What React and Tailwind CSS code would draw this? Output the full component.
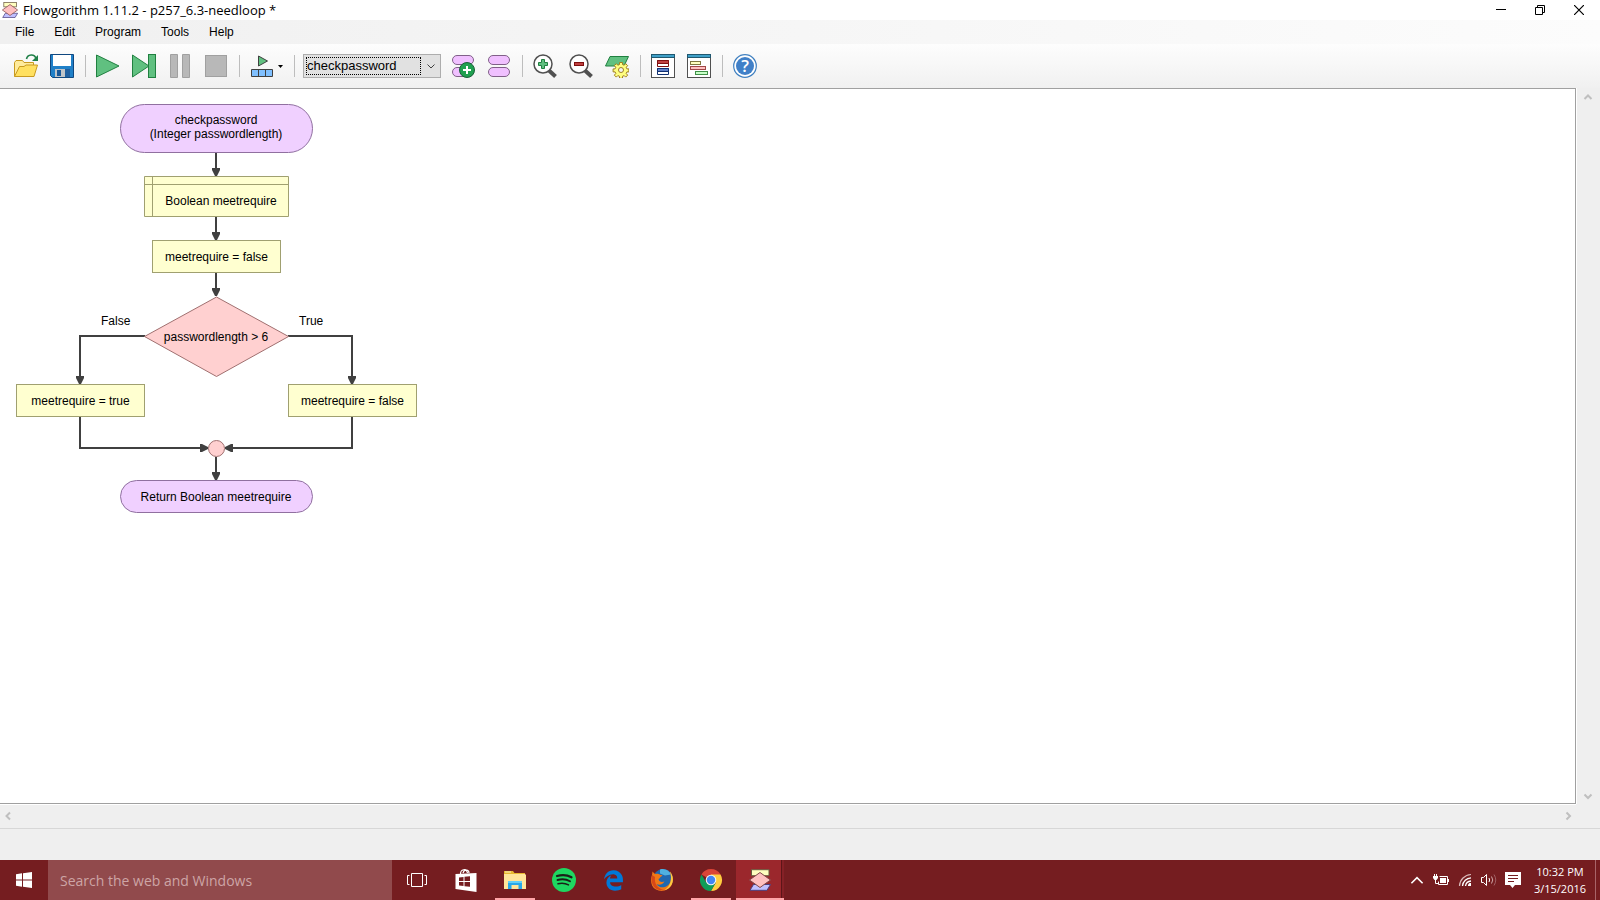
import { useState } from "react";
import { FaEdgeLegacy } from "react-icons/fa6";
import { clsx } from "clsx";

const MENUS = ["File", "Edit", "Program", "Tools", "Help"];
const FUNCTIONS = ["checkpassword", "Main"];

// --- ICONS ---
function Svg({ size = 24, box = 24, children }) {
  return (
    <svg width={size} height={size} viewBox={`0 0 ${box} ${box}`} fill="none" aria-hidden="true">
      {children}
    </svg>
  );
}

function AppLogo({ size }) {
  return (
    <Svg size={size} box={22}>
      <rect x="2.5" y="0.7" width="17.5" height="6" fill="#ffffc0" stroke="#6a5a40" />
      <path d="M4.5 15.5h17l-3.5 5.8H1z" fill="#c0c0ff" stroke="#4a4080" />
      <path d="M11 3.5 21.5 11 11 18.5 0.5 11z" fill="#ffc0c0" stroke="#804848" />
    </Svg>
  );
}

function OpenIcon() {
  return (
    <Svg>
      <path d="M.5 22.5v-14l1.500-2h6.500l1.500 2h9.500v3.500" fill="#ffeb9c" stroke="#c89a20" />
      <path d="M.5 22.500 5.500 12.500 10 12.500l2-1.500h11.500l-3.500 11.500z" fill="#ffe060" stroke="#c89a20" strokeLinejoin="round" />
      <path d="M12.500 5c1-5 8-5.500 9.500-.5" stroke="#208048" strokeWidth="1.600" />
      <path d="M24 1v6h-6z" fill="#208048" />
    </Svg>
  );
}

function SaveIcon() {
  return (
    <Svg>
      <path d="M.5.5h23v23h-21l-2-2z" fill="#2080c8" stroke="#104880" />
      <rect x="3" y="1" width="18" height="11" fill="#fff" />
      <rect x="5" y="15" width="15" height="8" fill="#c0c4c8" />
      <rect x="7" y="16" width="4" height="6" fill="#185898" />
      <rect x="15" y="15" width="5" height="8" fill="#2060a0" />
    </Svg>
  );
}

function PlayIcon() {
  return (
    <Svg>
      <path d="M.5 1 23 12 .5 23z" fill="#60c080" stroke="#208040" />
    </Svg>
  );
}

function StepIcon() {
  return (
    <Svg>
      <path d="M.5 1 17 12 .5 23z" fill="#60c080" stroke="#208040" />
      <rect x="16.500" y=".5" width="7" height="23" fill="#60c080" stroke="#208040" />
    </Svg>
  );
}

function PauseIcon() {
  return (
    <Svg>
      <path d="M2.500.5h7v23h-7zM14.500.5h7v23h-7z" fill="#b8b8b8" stroke="#a0a0a0" />
    </Svg>
  );
}

function StopIcon() {
  return (
    <Svg>
      <rect x="1.500" y="1.500" width="21" height="21" fill="#b8b8b8" stroke="#a0a0a0" />
    </Svg>
  );
}

function SpeedIcon() {
  return (
    <Svg>
      <path d="M8.500 2 17.500 7 8.500 12z" fill="#60c080" stroke="#404040" />
      <path d="M1.500 15.500h21v7h-21zM8.500 15.500v7M15.500 15.500v7" fill="#80c0ff" stroke="#404040" />
    </Svg>
  );
}

function Pills() {
  return (
    <g fill="#f0c0ff" stroke="#806088">
      <rect x="1.500" y="1.500" width="21" height="9" rx="4.500" />
      <rect x="1.500" y="13.500" width="21" height="9" rx="4.500" />
    </g>
  );
}

function AddFunctionIcon() {
  return (
    <Svg>
      <Pills />
      <circle cx="16" cy="16" r="7.500" fill="#20a050" stroke="#186038" />
      <path d="M16 12v8M12 16h8" stroke="#fff" strokeWidth="2" />
    </Svg>
  );
}

function FunctionsIcon() {
  return (
    <Svg>
      <Pills />
    </Svg>
  );
}

function Lens({ children }) {
  return (
    <Svg>
      <path d="m16 16.500 6.500 6" stroke="#505050" strokeWidth="4" />
      <circle cx="10" cy="10" r="9" fill="#fff" stroke="#505050" strokeWidth="1.500" />
      {children}
    </Svg>
  );
}

function ZoomInIcon() {
  return (
    <Lens>
      <path d="M8.500 5.500h3v3h3v3h-3v3h-3v-3h-3v-3h3z" fill="#60c080" stroke="#208040" />
    </Lens>
  );
}

function ZoomOutIcon() {
  return (
    <Lens>
      <rect x="5.500" y="8.500" width="9" height="3" fill="#c04040" stroke="#801010" />
    </Lens>
  );
}

function StyleIcon() {
  return (
    <Svg>
      <path d="M5 2.500h18.500L19 12H.5z" fill="#60c080" stroke="#208040" />
      <g transform="translate(16 16)">
        <path
          d="M-1.500-7.500h3v2l1.700.7 1.500-1.500 2 2-1.500 1.500.7 1.700h2v3h-2l-.7 1.700 1.500 1.500-2 2-1.500-1.500-1.700.7v2h-3v-2l-1.700-.7-1.500 1.500-2-2 1.500-1.500-.7-1.700h-2v-3h2l.7-1.700-1.500-1.500 2-2 1.500 1.500 1.700-.7z"
          fill="#ffff80"
          stroke="#a08020"
        />
        <circle r="2.500" fill="#f4f4f4" stroke="#a08020" />
      </g>
    </Svg>
  );
}

function WindowFrame({ children }) {
  return (
    <Svg>
      <rect x=".5" y=".5" width="23" height="23" fill="#fff" stroke="#505050" />
      <rect x=".5" y=".5" width="23" height="3" fill="#40a0c8" stroke="#205870" />
      {children}
    </Svg>
  );
}

function VariablesIcon() {
  return (
    <WindowFrame>
      <path d="M6.500 6.500h11v6h-11z" stroke="#801010" />
      <path d="M6.500 6.500h11v3h-11z" fill="#c04040" stroke="#801010" />
      <path d="M6.500 14.500h11v6h-11z" stroke="#103070" />
      <path d="M6.500 14.500h11v3h-11z" fill="#6080c8" stroke="#103070" />
    </WindowFrame>
  );
}

function ConsoleIcon() {
  return (
    <WindowFrame>
      <rect x="3.500" y="7.500" width="10" height="3" fill="#ffffc0" stroke="#807840" />
      <rect x="3.500" y="12.500" width="15" height="3" fill="#ffc0c0" stroke="#a04848" />
      <rect x="8.500" y="17.500" width="12" height="3" fill="#c8ffc8" stroke="#409048" />
    </WindowFrame>
  );
}

function HelpIcon() {
  return (
    <Svg>
      <circle cx="12" cy="12" r="11.300" fill="#fff" stroke="#4080c0" strokeWidth="1.200" />
      <circle cx="12" cy="12" r="9" fill="#4080c8" />
      <text x="12" y="18" textAnchor="middle" fill="#fff" fontSize="17" fontWeight="600" fontFamily="Open Sans, sans-serif">
        ?
      </text>
    </Svg>
  );
}

const CHEVRONS = {
  up: "M1.500 7 5 3.500 8.500 7",
  down: "M1.500 3.500 5 7 8.500 3.500",
  left: "M7 1.500 3.500 5 7 8.500",
  right: "M3.500 1.500 7 5 3.500 8.500",
};

function Chevron({ dir, size = 10, color = "#bfbfbf", weight = 2 }) {
  return (
    <Svg size={size} box={10}>
      <path d={CHEVRONS[dir]} stroke={color} strokeWidth={weight} />
    </Svg>
  );
}

// --- TITLE AND MENU ---
function TitleBar() {
  return (
    <header className="flex h-5 items-center bg-white pl-0.5">
      <AppLogo size={16} />
      <h1 className="ml-[5px] flex-1 font-['Open_Sans',sans-serif] text-[13px] leading-5 text-black">
        Flowgorithm 1.11.2 - p257_6.3-needloop *
      </h1>
      <div className="flex pr-0.5">
        <button aria-label="Minimize" className="flex h-5 w-[39px] items-center justify-center">
          <Svg size={10} box={10}>
            <path d="M0 4.500h10" stroke="#000" />
          </Svg>
        </button>
        <button aria-label="Restore" className="flex h-5 w-[39px] items-center justify-center">
          <Svg size={10} box={10}>
            <path d="M.5 2.500h7v7h-7zM2.500 2.500v-2h7v7h-2" stroke="#000" />
          </Svg>
        </button>
        <button aria-label="Close" className="flex h-5 w-[39px] items-center justify-center">
          <Svg size={10} box={10}>
            <path d="m0 0 10 10M10 0 0 10" stroke="#000" strokeWidth="1.200" />
          </Svg>
        </button>
      </div>
    </header>
  );
}

function MenuBar() {
  return (
    <nav className="flex h-6 items-center bg-linear-to-r from-[#f0f0f0] to-[#fcfcfc] pl-[5px]">
      {MENUS.map((name) => (
        <button key={name} className="px-2.5 text-[12px] leading-6 text-black">
          {name}
        </button>
      ))}
    </nav>
  );
}

// --- TOOLBAR ---
function Tool({ label, icon: Icon, disabled }) {
  return (
    <button aria-label={label} disabled={disabled} className="flex h-9 w-9 items-center justify-center">
      <Icon />
    </button>
  );
}

function Separator() {
  return (
    <div className="flex w-2.5 justify-center">
      <div className="h-[22px] w-px bg-[#bdbdbd]" />
    </div>
  );
}

function FunctionSelect() {
  const [value, setValue] = useState(FUNCTIONS[0]);

  return (
    <div className="mx-1 flex h-6 w-[138px] items-center border border-[#adadad] bg-[#e1e1e1] pl-0.5">
      <select
        aria-label="Function"
        value={value}
        onChange={(e) => setValue(e.target.value)}
        className="h-[18px] flex-1 appearance-none border border-dotted border-black text-[13px] leading-4 text-black outline-none"
      >
        {FUNCTIONS.map((name) => (
          <option key={name}>{name}</option>
        ))}
      </select>
      <span className="flex w-[19px] justify-center">
        <Chevron dir="down" weight={1} color="#404040" />
      </span>
    </div>
  );
}

function Toolbar() {
  return (
    <div className="flex h-11 items-center bg-linear-to-b from-[#fdfdfd] via-[#f7f7f7] to-[#f0f0f0] pl-2">
      <Tool label="Open" icon={OpenIcon} />
      <Tool label="Save" icon={SaveIcon} />
      <Separator />
      <Tool label="Run" icon={PlayIcon} />
      <Tool label="Step" icon={StepIcon} />
      <Tool label="Pause" icon={PauseIcon} disabled />
      <Tool label="Stop" icon={StopIcon} disabled />
      <Separator />
      <button aria-label="Run speed" className="flex h-9 w-[45px] items-center gap-1 pl-1.5">
        <SpeedIcon />
        <svg width="5" height="3" viewBox="0 0 5 3" aria-hidden="true">
          <path d="M0 0h5L2.500 3z" />
        </svg>
      </button>
      <Separator />
      <FunctionSelect />
      <Tool label="Add function" icon={AddFunctionIcon} />
      <Tool label="Manage functions" icon={FunctionsIcon} />
      <Separator />
      <Tool label="Zoom in" icon={ZoomInIcon} />
      <Tool label="Zoom out" icon={ZoomOutIcon} />
      <Tool label="Chart style" icon={StyleIcon} />
      <Separator />
      <Tool label="Variable watch" icon={VariablesIcon} />
      <Tool label="Console" icon={ConsoleIcon} />
      <Separator />
      <Tool label="Help" icon={HelpIcon} />
    </div>
  );
}

// --- FLOWCHART ---
const YELLOW = { fill: "#ffffd0", stroke: "#a0a070" };
const PINK = { fill: "#ffd0d0", stroke: "#a07070" };
const PURPLE = { fill: "#f0d0ff", stroke: "#9070a0" };

const ARROWS = [
  "M216 64v19",
  "M216 128v19",
  "M216 184v19",
  "M145 247H80v44",
  "M288 247h64v44",
  "M80 328v31h124",
  "M352 328v31H229",
  "M216 368v19",
];

function Label({ x, y, anchor = "middle", children }) {
  return (
    <text x={x} y={y} textAnchor={anchor} className="fill-black text-[12px]">
      {children}
    </text>
  );
}

function Box({ x, y, children }) {
  return (
    <g>
      <rect x={x} y={y} width="128" height="32" {...YELLOW} />
      <Label x={x + 64} y={y + 20.5}>{children}</Label>
    </g>
  );
}

function Flowchart() {
  return (
    <svg width="430" height="440" viewBox="0 0 430 440" role="img" aria-label="checkpassword flowchart">
      <defs>
        <marker id="head" markerUnits="userSpaceOnUse" markerWidth="8" markerHeight="8" refX="4" refY="4" orient="auto">
          <path d="M0 0h2l6 3v2L2 8H0z" fill="#404040" />
        </marker>
      </defs>
      {ARROWS.map((d) => (
        <path key={d} d={d} fill="none" stroke="#404040" strokeWidth="2" markerEnd="url(#head)" />
      ))}

      <rect x="120.5" y="15.5" width="192" height="48" rx="24" {...PURPLE} />
      <Label x={216} y={35}>checkpassword</Label>
      <Label x={216} y={49}>(Integer passwordlength)</Label>

      <path d="M144.5 87.500h144v40h-144zM152.500 87.500v40M144.500 95.500h144" {...YELLOW} />
      <Label x={221} y={116}>Boolean meetrequire</Label>

      <Box x={152.5} y={151.5}>meetrequire = false</Box>

      <path d="m216.500 208 72 39.500-72 40-72-40z" {...PINK} />
      <Label x={216} y={252}>{"passwordlength > 6"}</Label>
      <Label x={101} y={236} anchor="start">False</Label>
      <Label x={299} y={236} anchor="start">True</Label>

      <Box x={16.5} y={295.5}>meetrequire = true</Box>
      <Box x={288.5} y={295.5}>meetrequire = false</Box>

      <circle cx="216.5" cy="359.5" r="8" {...PINK} />

      <rect x="120.5" y="391.5" width="192" height="32" rx="16" {...PURPLE} />
      <Label x={216} y={412}>Return Boolean meetrequire</Label>
    </svg>
  );
}

function Workspace() {
  return (
    <div className="grid min-h-0 flex-1 grid-cols-[1fr_24px] grid-rows-[1fr_24px]">
      <main className="overflow-hidden border-t border-r border-b border-[#a0a0a0] bg-white">
        <Flowchart />
      </main>
      <div className="flex flex-col items-center justify-between border-l border-white pt-1 pr-0.5 pb-[3px]">
        <button aria-label="Scroll up"><Chevron dir="up" /></button>
        <button aria-label="Scroll down"><Chevron dir="down" /></button>
      </div>
      <div className="flex items-center justify-between border-t border-white px-[3px] pb-0.5">
        <button aria-label="Scroll left"><Chevron dir="left" /></button>
        <button aria-label="Scroll right"><Chevron dir="right" /></button>
      </div>
    </div>
  );
}

// --- TASKBAR ICONS ---
function WindowsLogo() {
  return (
    <Svg size={16} box={16}>
      <path d="M0 2.200 6 1.300v6.200H0zM7 1.200 16 0v7.500H7zM0 8.500h6v6.200l-6-.9zM7 8.500h9V16l-9-1.200z" fill="#fff" />
    </Svg>
  );
}

function TaskViewIcon() {
  return (
    <Svg size={20} box={20}>
      <path d="M4.500 3.500h11v13h-11zM2.500 5.500h-2v9h2M17.500 5.500h2v9h-2" stroke="#fff" />
    </Svg>
  );
}

function StoreIcon() {
  return (
    <Svg>
      <path d="M6.500 6c0-5 6-6 7-1M9 5c1-4 6-4 6 0" stroke="#fff" strokeWidth="1.200" />
      <path d="m1.500 6 21-1v19l-21-3z" fill="#fff" />
      <path d="m5 9.500 4.500-.5v4H5zM10.500 8.800l5.500-.6V13h-5.500zM5 14h4.500v4l-4.500-.6zM10.500 14H16v4.800l-5.500-.6z" fill="#751d20" />
    </Svg>
  );
}

function ExplorerIcon() {
  return (
    <Svg>
      <path d="M1 3h9l1.500 2H22v15H1z" fill="#e8b830" />
      <path d="M2 3.500h6v1H2z" fill="#fff4c0" />
      <path d="M1 6h21l1 1v14H1z" fill="#ffe59a" />
      <path d="M5 13h14v8h-3.500v-4h-7v4H5z" fill="#28a8e8" />
      <path d="M5 13h14v2H5z" fill="#60d0f8" />
    </Svg>
  );
}

function SpotifyIcon() {
  return (
    <Svg>
      <circle cx="12" cy="12" r="12" fill="#1ed760" />
      <g stroke="#1a2018" strokeLinecap="round">
        <path d="M5 8c5-1.500 10.500-1 14.500 1.300" strokeWidth="2.200" />
        <path d="M5.500 12c4.500-1.200 9-.7 12.500 1.300" strokeWidth="1.900" />
        <path d="M6 15.700c4-1 7.500-.5 10.500 1.200" strokeWidth="1.500" />
      </g>
    </Svg>
  );
}

function EdgeIcon() {
  return <FaEdgeLegacy size={21} color="#0078d7" aria-hidden="true" />;
}

function FirefoxIcon() {
  return (
    <Svg>
      <circle cx="13" cy="11" r="10" fill="#2068b0" />
      <path d="M10 1.500c5-1.500 9 1 11 5l-6 1-5-2z" fill="#50b0e0" />
      <path d="M20 3.500c3 4 4 9 1.500 13.500-3 5.500-10 7.500-15.500 4.500C1 19 0 12 2 7l.5-3.500L5 6c2-.5 4 0 5 .8 1 .2 2 .2 2.500.7L10 9.500c0 1-1 1-1.500 1.500.5 3 3 3.500 6 2.500-2 3.500-6 4-8 2.500 3 5.500 12 4 14-2.500.7-3.500.5-7-.5-10z" fill="#f07818" />
      <path d="M20 3.500c3 4 4 9 1.500 13.500-1.500 2.700-4 4.500-7 5.200 6-4 8-11 5.500-18.700z" fill="#ffc840" />
      <path d="M2 7c-1 6 0 11 4.500 14 3 1.500 5 1.500 8 1C8 21 4 16 5 9z" fill="#d84818" />
    </Svg>
  );
}

function ChromeIcon() {
  return (
    <Svg>
      <path d="M12 12 2.470 6.500A11 11 0 0 1 21.530 6.500z" fill="#db4437" />
      <path d="M12 12V6.500h9.530A11 11 0 0 1 12 23l4.800-8.500z" fill="#ffcd40" />
      <path d="m12 12-4.800 2.500-4.730-8A11 11 0 0 0 12 23l4.800-8.500z" fill="#0f9d58" />
      <circle cx="12" cy="12" r="5.300" fill="#f4f4f4" />
      <circle cx="12" cy="12" r="4.200" fill="#4285f4" />
    </Svg>
  );
}

function FlowIcon() {
  return <AppLogo size={22} />;
}

function BatteryIcon() {
  return (
    <Svg size={16} box={16}>
      <path d="M6.500 4.500h8v8h-9v-3M15.500 7v3" stroke="#fff" />
      <path d="M7 6h6v5H7z" fill="#fff" />
      <path d="M1.500 2v3M3.500 2v3M2.500 8v3.500H5" stroke="#fff" />
      <path d="M0 4h5v2L3.500 8h-2L0 6z" fill="#fff" />
    </Svg>
  );
}

function WifiIcon() {
  return (
    <Svg size={16} box={16}>
      <path d="M2.500 14A12 12 0 0 1 14 2.500" stroke="#d8b8b8" strokeWidth="1.200" />
      <path d="M5.500 14A9 9 0 0 1 14 5.800M8.500 14A6 6 0 0 1 14 9" stroke="#fff" strokeWidth="1.300" />
      <path d="M11 14v-1.500l1.500-1.500H14v3z" fill="#fff" />
    </Svg>
  );
}

function VolumeIcon() {
  return (
    <Svg size={16} box={16}>
      <path d="M.5 5.500h2l3-3v11l-3-3h-2z" stroke="#fff" />
      <path d="M8 6q1.300 2 0 4" stroke="#fff" />
      <path d="M10.500 4.500q2.500 3.500 0 7" stroke="#d0a8a8" />
      <path d="M13 2.500q3.500 5.500 0 11" stroke="#a06064" />
    </Svg>
  );
}

function ActionCenterIcon() {
  return (
    <Svg size={16} box={16}>
      <path d="M0 0h16v13h-6l-2.500 3L5 13H0z" fill="#fff" />
      <path d="M3 3.500h10M3 6.500h10M3 9.500h6" stroke="#751d20" />
    </Svg>
  );
}

// --- TASKBAR ---
const APPS = [
  { name: "Task View", icon: TaskViewIcon },
  { name: "Store", icon: StoreIcon },
  { name: "File Explorer", icon: ExplorerIcon, running: true },
  { name: "Spotify", icon: SpotifyIcon },
  { name: "Microsoft Edge", icon: EdgeIcon },
  { name: "Firefox", icon: FirefoxIcon },
  { name: "Google Chrome", icon: ChromeIcon, running: true },
  { name: "Flowgorithm", icon: FlowIcon, active: true },
];

const TRAY = [
  { name: "Battery", icon: BatteryIcon },
  { name: "Network", icon: WifiIcon },
  { name: "Volume", icon: VolumeIcon },
  { name: "Action center", icon: ActionCenterIcon },
];

function TaskButton({ app }) {
  const Icon = app.icon;
  return (
    <button
      aria-label={app.name}
      className={clsx("relative flex w-12 items-center justify-center", app.active && "bg-[#9b272c]")}
    >
      <Icon />
      {app.running && <span className="absolute bottom-0 h-0.5 w-10 bg-[#ffa5a8]" />}
      {app.active && (
        <>
          <span className="absolute inset-y-0 right-0 w-[3px] border-l border-[#5c1518] bg-[#852126]" />
          <span className="absolute bottom-0 h-0.5 w-full bg-[#ffa5a8]" />
        </>
      )}
    </button>
  );
}

function Taskbar() {
  return (
    <footer className="flex h-10 bg-[#751d20] font-['Open_Sans',sans-serif] text-white">
      <button aria-label="Start" className="flex w-12 items-center justify-center">
        <WindowsLogo />
      </button>
      <input
        type="search"
        aria-label="Search"
        placeholder="Search the web and Windows"
        className="w-[344px] bg-[#914a4c] px-3 text-[14px] outline-none placeholder:text-[#cda5a6]"
      />
      <div className="ml-px flex gap-px">
        {APPS.map((app) => (
          <TaskButton key={app.name} app={app} />
        ))}
      </div>
      <div className="ml-auto flex items-center">
        <button aria-label="Show hidden icons" className="mr-2">
          <Chevron dir="up" size={16} weight={1} color="#fff" />
        </button>
        <div className="flex gap-2">
          {TRAY.map(({ name, icon: Icon }) => (
            <button key={name} aria-label={name}>
              <Icon />
            </button>
          ))}
        </div>
        <div className="w-[74px] pl-1 text-center text-[11px] leading-[17px]">
          <div>10:32 PM</div>
          <div>3/15/2016</div>
        </div>
        <button aria-label="Show desktop" className="h-10 w-[5px] border-l border-[#a86468]" />
      </div>
    </footer>
  );
}

export default function App() {
  return (
    <div className="flex h-screen flex-col overflow-hidden bg-[#efefef] font-['Liberation_Sans',Arial,sans-serif]">
      <TitleBar />
      <MenuBar />
      <Toolbar />
      <Workspace />
      <div className="h-8 border-t border-[#d7d7d7]" />
      <Taskbar />
    </div>
  );
}
